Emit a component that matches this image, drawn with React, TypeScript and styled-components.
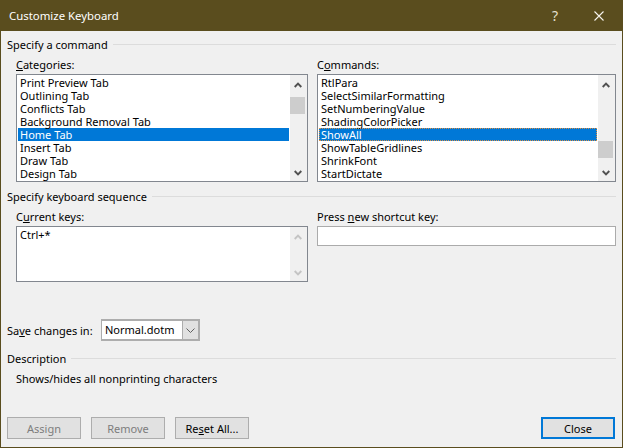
import styled, { createGlobalStyle } from 'styled-components';

const GlobalStyle = createGlobalStyle`
  html, body {
    margin: 0;
    padding: 0;
    background: #f0f0f0;
  }
`;

const Dialog = styled.div`
  box-sizing: border-box;
  width: 623px;
  height: 448px;
  display: flex;
  flex-direction: column;
  border: 1px solid #5a4d1e;
  border-top: 0;
  background: #f0f0f0;
  color: #000;
  font-family: 'Noto Sans', 'Open Sans', sans-serif;
  font-size: 11px;
  line-height: 13px;
  overflow: hidden;
`;

const TitleBar = styled.div`
  height: 31px;
  flex: none;
  margin: 0 -1px;
  padding: 0 17px 0 9px;
  display: flex;
  align-items: center;
  background: #5a4d1e;
  color: #fff;
  font-size: 11.4px;
`;

const Title = styled.div`
  flex: 1;
`;

const TitleButton = styled.button`
  all: unset;
  display: flex;
  justify-content: center;
  width: 14px;
  margin-left: ${(p: { $gap?: number }) => p.$gap ?? 0}px;
  color: #e4e0d2;
  font-size: 14px;
`;

const Body = styled.div`
  flex: 1;
  display: flex;
  flex-direction: column;
  padding: 7px 6px 8px;
`;

const SectionHead = styled.div<{ $top?: number }>`
  display: flex;
  align-items: center;
  gap: 5px;
  height: 13px;
  margin-top: ${(p) => p.$top ?? 0}px;
  white-space: nowrap;

  &::after {
    content: '';
    flex: 1;
    height: 1px;
    background: #dcdcdc;
  }
`;

const Columns = styled.div`
  display: grid;
  grid-template-columns: 292px 299px;
  column-gap: 9px;
  margin: 7px 0 0 9px;
`;

const Field = styled.div`
  display: flex;
  flex-direction: column;
  align-items: stretch;
`;

const Label = styled.label`
  height: 13px;
  margin-bottom: 3px;
`;

const ListFrame = styled.div<{ $height: number }>`
  box-sizing: border-box;
  height: ${(p) => p.$height}px;
  display: flex;
  border: 1px solid #82878f;
  background: #fff;
`;

const Rows = styled.div`
  flex: 1;
  min-width: 0;
  padding: 1px 1px;
`;

const Row = styled.div<{ $selected?: boolean; $focused?: boolean }>`
  box-sizing: border-box;
  height: 13px;
  padding-left: 2px;
  line-height: 13px;
  white-space: nowrap;
  background: ${(p) => (p.$selected ? '#0078d7' : 'transparent')};
  color: ${(p) => (p.$selected ? '#fff' : '#000')};
  outline: ${(p) => (p.$focused ? '1px dotted #d98f45' : 'none')};
  outline-offset: -1px;
`;

const KeysText = styled.div`
  flex: 1;
  padding: 1px 0 0 3px;
`;

const ScrollBar = styled.div`
  width: 15px;
  flex: none;
  display: flex;
  flex-direction: column;
  padding-right: 2px;
  background: #f0f0f0;
`;

const ScrollButton = styled.div<{ $up?: boolean }>`
  box-sizing: border-box;
  height: 17px;
  flex: none;
  display: flex;
  align-items: center;
  justify-content: center;
  padding-top: ${(p) => (p.$up ? 3 : 0)}px;
`;

const Track = styled.div`
  flex: 1;
`;

const Thumb = styled.div<{ $top: number }>`
  height: 17px;
  margin-top: ${(p) => p.$top}px;
  background: #cdcdcd;
`;

const KeyInput = styled.div`
  box-sizing: border-box;
  height: 20px;
  border: 1px solid #ababab;
  background: #fff;
`;

const SaveRow = styled.div`
  display: flex;
  align-items: center;
  margin-top: 37px;
  height: 22px;
`;

const SaveLabel = styled.label`
  width: 94px;
`;

const Select = styled.div`
  box-sizing: border-box;
  width: 99px;
  height: 22px;
  display: flex;
  border: 2px solid #adadad;
  border-left-width: 1px;
  background: #fff;
`;

const SelectValue = styled.div`
  flex: 1;
  padding-left: 3px;
  line-height: 18px;
`;

const SelectButton = styled.div`
  width: 15px;
  display: flex;
  align-items: center;
  justify-content: center;
  background: #e1e1e1;
  border-left: 1px solid #adadad;
`;

const Description = styled.div`
  margin: 7px 0 0 9px;
  height: 13px;
`;

const Footer = styled.div`
  margin-top: auto;
  display: flex;
  gap: 10px;
`;

const Button = styled.button<{ $primary?: boolean }>`
  box-sizing: border-box;
  width: 74px;
  height: 22px;
  padding: 0;
  margin-left: ${(p) => (p.$primary ? 'auto' : '0')};
  margin-right: ${(p) => (p.$primary ? '1px' : '0')};
  border: ${(p) => (p.$primary ? '2px solid #0078d7' : '1px solid #adadad')};
  background: #e1e1e1;
  color: #000;
  font: inherit;

  &:disabled {
    color: #7d7d7d;
  }
`;

const Chevron = ({ up, color = '#505050' }: { up?: boolean; color?: string }) => (
  <svg width={8} height={6} viewBox="0 0 8 6">
    <path
      d={up ? 'M0.7 5L4 1.7L7.3 5' : 'M0.7 1L4 4.3L7.3 1'}
      fill="none"
      stroke={color}
      strokeWidth="1.9"
    />
  </svg>
);

const ThinChevron = () => (
  <svg width={9} height={5} viewBox="0 0 9 5">
    <path d="M0.5 0.5L4.5 4.5L8.5 0.5" fill="none" stroke="#606060" strokeWidth="1" />
  </svg>
);

const categories = [
  'Print Preview Tab',
  'Outlining Tab',
  'Conflicts Tab',
  'Background Removal Tab',
  'Home Tab',
  'Insert Tab',
  'Draw Tab',
  'Design Tab',
];

const commands = [
  'RtlPara',
  'SelectSimilarFormatting',
  'SetNumberingValue',
  'ShadingColorPicker',
  'ShowAll',
  'ShowTableGridlines',
  'ShrinkFont',
  'StartDictate',
];

const Scroller = ({ thumbTop, color }: { thumbTop?: number; color?: string }) => (
  <ScrollBar>
    <ScrollButton $up>
      <Chevron up color={color} />
    </ScrollButton>
    <Track>{thumbTop !== undefined && <Thumb $top={thumbTop} />}</Track>
    <ScrollButton>
      <Chevron color={color} />
    </ScrollButton>
  </ScrollBar>
);

export default function App() {
  return (
    <>
      <GlobalStyle />
      <Dialog>
        <TitleBar>
          <Title>Customize Keyboard</Title>
          <TitleButton>?</TitleButton>
          <TitleButton $gap={30}>
            <svg width="10" height="10" viewBox="0 0 10 10">
              <path d="M0.5 0.5L9.5 9.5M9.5 0.5L0.5 9.5" stroke="#f7f5ee" strokeWidth="1.1" fill="none" />
            </svg>
          </TitleButton>
        </TitleBar>
        <Body>
          <SectionHead>Specify a command</SectionHead>
          <Columns>
            <Field>
              <Label>
                <u>C</u>ategories:
              </Label>
              <ListFrame $height={108}>
                <Rows>
                  {categories.map((c) => (
                    <Row key={c} $selected={c === 'Home Tab'}>
                      {c}
                    </Row>
                  ))}
                </Rows>
                <Scroller thumbTop={5} />
              </ListFrame>
            </Field>
            <Field>
              <Label>
                C<u>o</u>mmands:
              </Label>
              <ListFrame $height={108}>
                <Rows>
                  {commands.map((c) => (
                    <Row key={c} $selected={c === 'ShowAll'} $focused={c === 'ShowAll'}>
                      {c}
                    </Row>
                  ))}
                </Rows>
                <Scroller thumbTop={49} />
              </ListFrame>
            </Field>
          </Columns>
          <SectionHead $top={8}>Specify keyboard sequence</SectionHead>
          <Columns>
            <Field>
              <Label>
                C<u>u</u>rrent keys:
              </Label>
              <ListFrame $height={56}>
                <KeysText>Ctrl+*</KeysText>
                <Scroller color="#c4c4c4" />
              </ListFrame>
            </Field>
            <Field>
              <Label>
                Press <u>n</u>ew shortcut key:
              </Label>
              <KeyInput />
            </Field>
          </Columns>
          <SaveRow>
            <SaveLabel>
              Sa<u>v</u>e changes in:
            </SaveLabel>
            <Select>
              <SelectValue>Normal.dotm</SelectValue>
              <SelectButton>
                <ThinChevron />
              </SelectButton>
            </Select>
          </SaveRow>
          <SectionHead $top={11}>Description</SectionHead>
          <Description>Shows/hides all nonprinting characters</Description>
          <Footer>
            <Button disabled>Assign</Button>
            <Button disabled>Remove</Button>
            <Button>
              Re<u>s</u>et All...
            </Button>
            <Button $primary>Close</Button>
          </Footer>
        </Body>
      </Dialog>
    </>
  );
}
